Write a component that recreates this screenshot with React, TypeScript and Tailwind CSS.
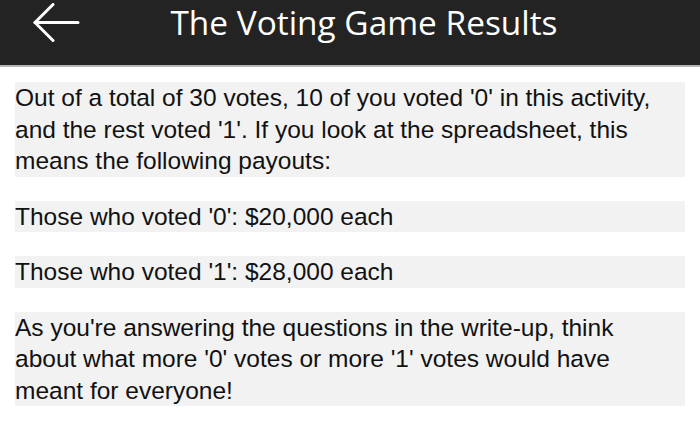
export default function App() {
  const sans = { fontFamily: '"Liberation Sans", Arial, sans-serif' };
  return (
    <div className="w-[700px] h-[441px] bg-white overflow-hidden">
      <div className="h-[67px] bg-[#232323] border-b-2 border-[#b5b5b5] flex items-start">
        <div className="w-[110px] pl-[33px] pt-[3px]">
          <svg width="48" height="40" viewBox="0 0 48 40" fill="none" stroke="white" strokeWidth="3" strokeLinecap="round" strokeLinejoin="round">
            <path d="M2 19.5 H45" />
            <path d="M20 1.5 L2 19.5 L20 37.5" />
          </svg>
        </div>
        <h1
          className="flex-1 text-center pr-[82px] text-white text-[33.4px] leading-[45px] font-normal"
          style={{ fontFamily: '"Open Sans", sans-serif' }}
        >
          The Voting Game Results
        </h1>
      </div>
      <div className="px-[15px] pt-[15px] flex flex-col gap-[24px] text-[24.5px] leading-[31.5px] text-[#111]" style={sans}>
        <p className="bg-[#f2f2f2] pr-[12px]">
          Out of a total of 30 votes, 10 of you voted '0' in this activity, and the rest voted '1'. If you look at the spreadsheet, this means the following payouts:
        </p>
        <p className="bg-[#f2f2f2] pr-[12px]">Those who voted '0': $20,000 each</p>
        <p className="bg-[#f2f2f2] pr-[12px]">Those who voted '1': $28,000 each</p>
        <p className="bg-[#f2f2f2] pr-[12px]">
          As you're answering the questions in the write-up, think about what more '0' votes or more '1' votes would have meant for everyone!
        </p>
      </div>
    </div>
  );
}
